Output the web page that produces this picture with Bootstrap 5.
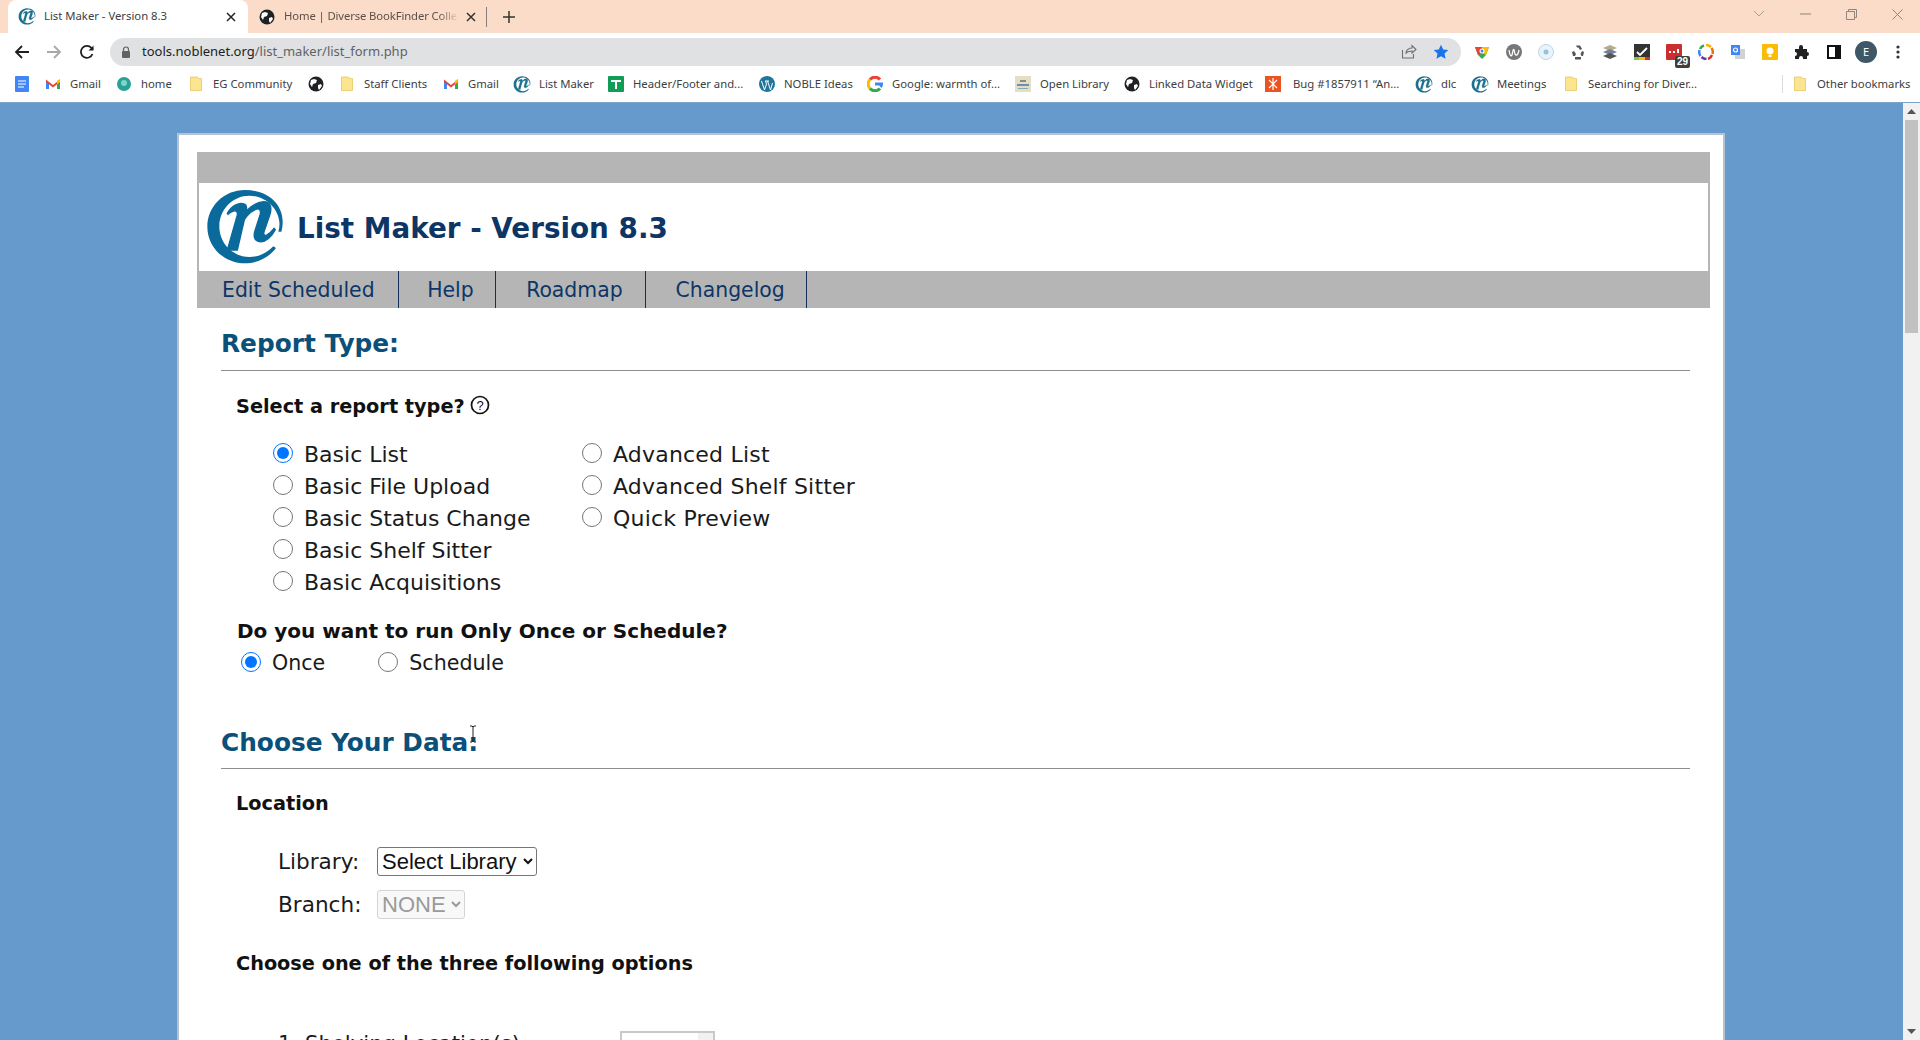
<!DOCTYPE html>
<html lang="en">
<head>
<meta charset="utf-8">
<title>List Maker - Version 8.3</title>
<link href="https://cdn.jsdelivr.net/npm/bootstrap@5.3.0/dist/css/bootstrap.min.css" rel="stylesheet">
<style>
html,body{height:1040px;overflow:hidden}
body{font-family:"DejaVu Sans",sans-serif;background:#fff;color:#111}
.uichrome{font-family:"Noto Sans","Open Sans",sans-serif;color:#3c4043}
.tabstrip{height:33px;background:#fbdcc8;padding-left:8px}
.tabitem{height:33px;font-size:11.3px;white-space:nowrap}
.tabactive{width:240px;background:#fff;border-radius:8px 8px 0 0;padding-left:11px}
.tabother{width:280px;padding-left:11px}
.tabfavicon{margin-right:7px;flex:none}
.tablabel{width:176px;overflow:hidden}
.tabactive .tablabel{width:177px;margin-left:9px}
.tabother .tablabel{width:175px;margin-left:9px;letter-spacing:-.12px;-webkit-mask-image:linear-gradient(90deg,#000 88%,transparent);mask-image:linear-gradient(90deg,#000 88%,transparent);color:#5b5048}
.closemark{margin-left:5px}
.tabother .closemark{margin-left:7px}
.tabsep{width:1px;height:20px;background:#8a7f78;margin:0 16px 0 10px}
.winctl{width:46px;height:28px}
.toolbar{height:36px;background:#fff;padding-top:5px;align-items:flex-start}
.navbtn{width:32px;height:28px;flex:none}
.navfirst{margin-left:2px}
.navthird{margin-left:1px}
.addrbar{width:1351px;height:28px;background:#dfe1e2;border-radius:14px;margin-left:7px;padding-left:11px;font-size:13px;flex:none}
.urltext{margin-left:3px}
.urlhost{color:#202124}.urlpath{color:#5f6368}
.starmark{margin:0 12px 0 16px}
.extgroup{margin-left:5px}
.extcell{width:32px;height:28px;flex:none;position:relative}
.extbadge{position:absolute;right:0;bottom:-2px;background:#3c4043;color:#fff;font:700 10px/12px "Liberation Sans",sans-serif;padding:0 2px;border-radius:2px}
.bmbar{height:33px;background:#fff;font-size:11.3px;padding:0 0 3px 14px;display:grid;grid-template-columns:31px 71px 72px 120px 31px 104px 71px 94px 151px 108px 148px 109px 141px 151px 56px 91px 219px 10px auto;align-items:center;color:#3c4043;white-space:nowrap}
.bmsep{width:1px;height:18px;background:#dadce0}
.gapnine{gap:9px}
.gapbug{gap:12px}
.nfav{margin:0 -2px;color:#1b6f8f;flex:none}
.pageview{height:938px;overflow:hidden;background:#6699cc;border-top:1px solid #7ea3cb}
.pagescroll{flex:1 1 auto;min-width:0;overflow:hidden;position:relative}
.scrollrail{width:17px;flex:none;background:#f1f1f1}
.scrollbtn{height:17px;flex:none}
.scrollthumb{width:13px;height:213px;background:#c1c1c1;margin-left:2px;flex:none}
.scrollfill{flex:1 1 auto}
.sheet{width:1548px;margin:30px 0 0 177px;background:#fff;border:2px solid #b4c2d1;border-bottom:0;padding:17px 13px 60px 18px;border-radius:0}
.topband{height:31px;background:#b5b5b5}
.titlebox{height:88px;border:solid #b5b5b5;border-width:0 2px;background:#fff;padding-left:1px;gap:7px}
.titletext{font-size:27.8px;font-weight:700;color:#0d3566;margin:3px 0 0;line-height:1.2}
.logomark{color:#0a6a9c;flex:none}
.menustrip{height:37px;background:#b5b5b5}
.menustrip .nav-link{height:37px;padding:0 21.5px 0 30px;font-size:20.4px;color:#0d3566;border-right:1px solid #14305a;line-height:38px}
.menustrip .nav-item:nth-child(1) .nav-link{padding:0 23px 0 25px}
.menustrip .nav-item:nth-child(2) .nav-link{padding:0 21.5px 0 28.500px}
.menustrip .nav-item:nth-child(3) .nav-link{padding-right:22px}
.formbody{padding-left:24px;width:1493px}
.sectionhead{font-size:24.8px;font-weight:700;color:#0a5078;line-height:30px;margin:21px 0 11px 0}
.sectionrule{margin:0;border:0;border-top:1px solid #8d8d8d;opacity:1;width:1469px}
.subhead{font-size:19.3px;font-weight:700;line-height:24px;margin-left:15px;color:#111}
.subwide{font-size:20px;margin-left:16px;margin-top:21px}
.optionrow{height:32px;font-size:22px;gap:11px;white-space:nowrap;color:#1a1a1a}
.optionrow input{width:20px;height:20px;margin:0 0 3px 0;flex:none}
.optionrow label{margin:0}
.optiongrid{margin:19px 0 0 52px}
.optioncol{width:309px}
.optionwide{letter-spacing:.2px}
.oncewrap{margin:4px 0 0 20px}
.oncewrap .optionrow{font-size:20.6px}
.oncewrap .optionrow+.optionrow{margin-left:53px}
.fieldrow{height:29px;font-size:21.6px;margin-left:57px;color:#1a1a1a}
.fieldrow label{width:99px;margin:0;padding-top:2px;white-space:nowrap}
.nativepick{font:22px/25px "Liberation Sans",Arial,sans-serif;height:29px;border:1px solid #767676;border-radius:3px;background:#fff;color:#111;padding:0}
.nativepick:disabled{color:#9a9a9a;border-color:#d4d4d4;background:#f8f8f8;opacity:1}
.pickwide{width:160px}
.picknarrow{width:88px}
.listpick{width:95px;height:120px;border:2px solid #c9c9c9;background:#fff;flex:none}
.listtrack{width:15px;background:#f1f1f1}
.shelfrow{margin:55px 0 0 57px;height:120px}
.shelflabel{width:342px;font-size:21.2px;line-height:20px;padding-top:3px;white-space:nowrap;color:#1a1a1a}
.helpmark{margin:0 0 4px 5px}
.nfill{stroke:currentColor;stroke-width:4}
.mtone{margin-top:24px}
.mttwo{margin-top:31px}
.mtthree{margin-top:14px}
.mtfour{margin-top:33px}
.mtfive{margin-top:23px}
.headlow{margin-top:49px;margin-bottom:10px}
.caret{position:absolute;left:469px;top:622px}
</style>
</head>
<body>
<svg width="0" height="0" class="position-absolute">
<defs>
<symbol id="nlogo" viewBox="0 0 270 252">
<path fill-rule="evenodd" d="M135 15C72 15 22 64 22 125s50 110 113 110c38 0 72-18 93-46l-8-5c-19 20-44 32-72 32-50 0-90-41-90-92s40-92 90-92c46 0 86 36 90 78 1 10 0 20-3 30h9c3-10 4-20 4-30 0-57-50-95-113-95z" fill="currentColor"/>
<path class="nfill" d="M82 85C95 62 118 50 135 58c7 4 5 20 1 34L112 195H82l30-105c2-10-4-14-12-12-6 2-12 6-16 10z" fill="currentColor"/>
<path class="nfill" d="M118 108c17-33 47-58 74-58 20 0 24 18 18 38l-18 52c-2 10 2 13 8 10 8-4 16-12 22-20l4 4c-12 22-30 38-48 36-14-2-18-15-14-30l16-50c4-14-2-20-10-18-20 6-42 33-52 58z" fill="currentColor"/>
</symbol>
<symbol id="folder" viewBox="0 0 16 16"><path d="M2.500 1h7l1 1.500h3v12h-11z" fill="#fce58f" stroke="#e6c766" stroke-width=".8"/></symbol>
<symbol id="gmail" viewBox="0 0 16 16"><path d="M1 4v9h3V7z" fill="#4285f4"/><path d="M15 4v9h-3V7z" fill="#34a853"/><path d="M1 3.500 8 9l7-5.500V6L8 11.500 1 6z" fill="#ea4335"/><path d="M12 4.800 15 3v3l-3 2.400z" fill="#fbbc04"/></symbol>
<symbol id="globe" viewBox="0 0 16 16"><circle cx="8" cy="8" r="7.500" fill="#202124"/><path d="M3 4l3-1 3 1-1 3-3 1-1 3-2-3zM10 9l3-1 1 2-3 4-1-2z" fill="#fff"/></symbol>
</defs>
</svg>

<div class="uichrome">
<div class="tabstrip d-flex align-items-end">
  <div class="tabitem tabactive d-flex align-items-center">
    <svg width="20" height="19" class="tabfavicon nfav"><use href="#nlogo"/></svg>
    <span class="tablabel">List Maker - Version 8.3</span>
    <svg width="10" height="10" viewBox="0 0 10 10" class="closemark"><path d="M1 1l8 8M9 1l-8 8" stroke="#222" stroke-width="1.500"/></svg>
  </div>
  <div class="tabitem tabother d-flex align-items-center">
    <svg width="16" height="16" class="flex-none"><use href="#globe"/></svg>
    <span class="tablabel">Home | Diverse BookFinder Colle</span>
    <svg width="10" height="10" viewBox="0 0 10 10" class="closemark"><path d="M1 1l8 8M9 1l-8 8" stroke="#333" stroke-width="1.500"/></svg>
    <span class="tabsep"></span>
    <svg width="12" height="12" viewBox="0 0 12 12"><path d="M6 0v12M0 6h12" stroke="#333" stroke-width="1.500"/></svg>
  </div>
  <div class="d-flex ms-auto align-self-start">
    <div class="winctl d-flex align-items-center justify-content-center"><svg width="12" height="8" viewBox="0 0 12 8"><path d="M1 1l5 5 5-5" fill="none" stroke="#a89e97"/></svg></div>
    <div class="winctl d-flex align-items-center justify-content-center"><svg width="11" height="2"><path d="M0 1h11" stroke="#8f8680"/></svg></div>
    <div class="winctl d-flex align-items-center justify-content-center"><svg width="11" height="11" viewBox="0 0 11 11"><path d="M.5 2.500h8v8h-8zM2.500 2.500v-2h8v8h-2" fill="none" stroke="#8f8680"/></svg></div>
    <div class="winctl d-flex align-items-center justify-content-center"><svg width="11" height="11" viewBox="0 0 11 11"><path d="M.5.5l10 10M10.500.5l-10 10" stroke="#8f8680"/></svg></div>
  </div>
</div>

<div class="toolbar d-flex ps-1">
  <div class="navbtn navfirst d-flex align-items-center justify-content-center"><svg width="16" height="16" viewBox="0 0 16 16"><path d="M15 8H2M8 2 2 8l6 6" fill="none" stroke="#1f1f1f" stroke-width="1.800"/></svg></div>
  <div class="navbtn d-flex align-items-center justify-content-center"><svg width="16" height="16" viewBox="0 0 16 16"><path d="M1 8h13M8 2l6 6-6 6" fill="none" stroke="#a6a8ab" stroke-width="1.800"/></svg></div>
  <div class="navbtn navthird d-flex align-items-center justify-content-center"><svg width="16" height="16" viewBox="0 0 16 16"><path d="M13.500 10A6 6 0 1 1 12.500 4L14 5.500" fill="none" stroke="#1f1f1f" stroke-width="1.800"/><path d="M14.500 1.500v5h-5z" fill="#1f1f1f"/></svg></div>
  <div class="addrbar d-flex align-items-center">
    <svg width="10" height="12" viewBox="0 0 10 12" class="me-2"><path d="M2.500 5V3.500a2.500 2.500 0 0 1 5 0V5" fill="none" stroke="#5f6368" stroke-width="1.200"/><rect x="1" y="5" width="8" height="7" rx="1" fill="#5f6368"/></svg>
    <span class="urltext"><span class="urlhost">tools.noblenet.org</span><span class="urlpath">/list_maker/list_form.php</span></span>
    <svg width="16" height="16" viewBox="0 0 16 16" class="ms-auto"><path d="M1.500 6v8h11v-4M5 9c0-3 3-5 6-5V1.500L15 5.500 11 9V7c-3 0-5 1-6 2z" fill="none" stroke="#6d7175" stroke-width="1.100"/></svg>
    <svg width="16" height="16" viewBox="0 0 16 16" class="starmark"><path d="M8 .8l2.200 4.700 5.100.6-3.800 3.500 1 5.100L8 12.200l-4.500 2.500 1-5.100L.7 6.100l5.100-.6z" fill="#1a73e8"/></svg>
  </div>
  <div class="extgroup d-flex">
    <div class="extcell d-flex align-items-center justify-content-center"><svg width="16" height="16" viewBox="0 0 16 16"><path d="M1 3h14l-3 8-4 4-4-4z" fill="#34a853"/><path d="M1 3h7v6L4 11z" fill="#ea4335"/><path d="M8 3h7l-3 8-4-2z" fill="#fbbc04"/><circle cx="8" cy="7" r="2.500" fill="#fff"/><circle cx="8" cy="7" r="1.500" fill="#4285f4"/></svg></div>
    <div class="extcell d-flex align-items-center justify-content-center"><svg width="16" height="16" viewBox="0 0 16 16"><circle cx="8" cy="8" r="8" fill="#777"/><path d="M3 6c1 7 3 7 3.500 3S8 4 8.500 8s3 5 4.500-2" fill="none" stroke="#fff" stroke-width="1.300"/></svg></div>
    <div class="extcell d-flex align-items-center justify-content-center"><svg width="16" height="16" viewBox="0 0 16 16"><circle cx="8" cy="8" r="7.500" fill="#eaf3f8" stroke="#bcd6e4"/><circle cx="8" cy="8" r="2.500" fill="#8fc3e3"/></svg></div>
    <div class="extcell d-flex align-items-center justify-content-center"><svg width="16" height="16" viewBox="0 0 16 16"><path d="M6 1.500h4l2 3.500-2 1-1.500-2.500H7zM2 8l2-1 2 3-1 2H3zM14 8l-2-1-1.500 3 1 2H13zM5 13h6v2.500H5z" fill="#555"/></svg></div>
    <div class="extcell d-flex align-items-center justify-content-center"><svg width="16" height="16" viewBox="0 0 16 16"><path d="M1 4l7-3 7 3-7 3z" fill="#b9a98d"/><path d="M1 8l7-3 7 3-7 3z" fill="#6f8299"/><path d="M1 12l7-3 7 3-7 3z" fill="#555"/></svg></div>
    <div class="extcell d-flex align-items-center justify-content-center"><svg width="16" height="16" viewBox="0 0 16 16"><rect width="16" height="16" fill="#333"/><path d="M3 8l3 3 7-7" fill="none" stroke="#fff" stroke-width="1.800"/><path d="M0 13h5v3H0z" fill="#8bc34a"/><path d="M5 13h6v3H5z" fill="#fbbc04"/><path d="M11 13h5v3h-5z" fill="#d32f2f"/></svg></div>
    <div class="extcell d-flex align-items-center justify-content-center"><svg width="16" height="16" viewBox="0 0 16 16"><rect width="16" height="16" rx="1" fill="#cc2e2e"/><path d="M3 7h2v2H3zM7 7h2v2H7zM11 5h2v4h-2z" fill="#fff"/></svg><span class="extbadge">29</span></div>
    <div class="extcell d-flex align-items-center justify-content-center"><svg width="16" height="16" viewBox="0 0 16 16" fill="none" stroke-width="2.500"><path d="M8 1a7 7 0 0 1 5 2" stroke="#f4b400"/><path d="M13.500 4a7 7 0 0 1 1 6" stroke="#e8710a"/><path d="M14 11a7 7 0 0 1-4 4" stroke="#d93025"/><path d="M8.500 15a7 7 0 0 1-5-2" stroke="#673ab7"/><path d="M2.500 12a7 7 0 0 1-1-6" stroke="#4285f4"/><path d="M2 5a7 7 0 0 1 4-3.500" stroke="#34a853"/></svg></div>
    <div class="extcell d-flex align-items-center justify-content-center"><svg width="16" height="16" viewBox="0 0 16 16"><path d="M1 1h9v10H1z" fill="#4285f4"/><path d="M10 5h5v10H5v-4h5z" fill="#cfd3d7"/><circle cx="5.500" cy="6" r="2" fill="none" stroke="#fff" stroke-width="1.200"/></svg></div>
    <div class="extcell d-flex align-items-center justify-content-center"><svg width="16" height="16" viewBox="0 0 16 16"><rect width="16" height="16" rx="1" fill="#fbbc04"/><circle cx="8" cy="7" r="3.500" fill="#fff"/><path d="M6.500 11h3v2h-3z" fill="#fff"/></svg></div>
    <div class="extcell d-flex align-items-center justify-content-center"><svg width="16" height="16" viewBox="0 0 16 16"><path d="M1 5h4V3a2 2 0 0 1 4 0v2h4v3a2 2 0 0 1 0 4v3H9v-1a2 2 0 0 0-4 0v1H1v-3a2 2 0 0 0 0-4z" fill="#222"/></svg></div>
    <div class="extcell d-flex align-items-center justify-content-center"><svg width="14" height="14" viewBox="0 0 14 14"><path d="M0 0h14v14H0z" fill="#111"/><path d="M2 2h6v10H2z" fill="#fff"/></svg></div>
    <div class="extcell d-flex align-items-center justify-content-center"><svg width="22" height="22" viewBox="0 0 22 22"><circle cx="11" cy="11" r="11" fill="#3f5766"/><text x="11" y="15" font-size="11" fill="#fff" text-anchor="middle" font-family="Noto Sans">E</text></svg></div>
    <div class="extcell d-flex align-items-center justify-content-center"><svg width="4" height="14" viewBox="0 0 4 14"><circle cx="2" cy="2" r="1.600" fill="#333"/><circle cx="2" cy="7" r="1.600" fill="#333"/><circle cx="2" cy="12" r="1.600" fill="#333"/></svg></div>
  </div>
</div>

<div class="bmbar">
  <div><svg width="16" height="16" viewBox="0 0 16 16"><rect x="1" width="14" height="16" rx="1" fill="#4285f4"/><path d="M4 5h8M4 8h8M4 11h6" stroke="#fff" stroke-width="1.200"/></svg></div>
  <div class="d-flex gapnine align-items-center"><svg width="16" height="16"><use href="#gmail"/></svg><span>Gmail</span></div>
  <div class="d-flex gapnine align-items-center"><svg width="16" height="16" viewBox="0 0 16 16"><circle cx="8" cy="8" r="7" fill="#2aa198"/><circle cx="8" cy="7" r="3" fill="#7ed6c4"/></svg><span>home</span></div>
  <div class="d-flex gapnine align-items-center"><svg width="16" height="16"><use href="#folder"/></svg><span>EG Community</span></div>
  <div><svg width="16" height="16"><use href="#globe"/></svg></div>
  <div class="d-flex gapnine align-items-center"><svg width="16" height="16"><use href="#folder"/></svg><span>Staff Clients</span></div>
  <div class="d-flex gapnine align-items-center"><svg width="16" height="16"><use href="#gmail"/></svg><span>Gmail</span></div>
  <div class="d-flex gapnine align-items-center"><svg width="20" height="19" class="nfav"><use href="#nlogo"/></svg><span>List Maker</span></div>
  <div class="d-flex gapnine align-items-center"><svg width="16" height="16" viewBox="0 0 16 16"><rect width="16" height="16" rx="1" fill="#0f9d58"/><path d="M3 5h10M8 5v8" stroke="#fff" stroke-width="2"/></svg><span>Header/Footer and...</span></div>
  <div class="d-flex gapnine align-items-center"><svg width="16" height="16" viewBox="0 0 16 16"><circle cx="8" cy="8" r="8" fill="#21759b"/><path d="M2.500 5l3 9 2-6-1-3M6 5h4M8.500 5l3 9 2-7" fill="none" stroke="#fff"/></svg><span>NOBLE Ideas</span></div>
  <div class="d-flex gapnine align-items-center"><svg width="16" height="16" viewBox="0 0 16 16" fill="none" stroke-width="3"><path d="M13 3.500A6.500 6.500 0 0 0 3 3.500" stroke="#ea4335"/><path d="M3 3.500a6.500 6.500 0 0 0 0 9" stroke="#fbbc04"/><path d="M3 12.500a6.500 6.500 0 0 0 10 0" stroke="#34a853"/><path d="M13.500 11c1-1 1-2 1-3H8" stroke="#4285f4"/></svg><span>Google: warmth of...</span></div>
  <div class="d-flex gapnine align-items-center"><svg width="16" height="16" viewBox="0 0 16 16"><rect width="16" height="16" fill="#e4dfc4"/><path d="M2 8h12v2H2z" fill="#6a8dbb"/><path d="M5 4h6v2H5z" fill="#8a8f7a"/><path d="M3 12h10v1H3z" fill="#8aa"/></svg><span>Open Library</span></div>
  <div class="d-flex gapnine align-items-center"><svg width="16" height="16"><use href="#globe"/></svg><span>Linked Data Widget</span></div>
  <div class="d-flex gapbug align-items-center"><svg width="16" height="16" viewBox="0 0 16 16"><rect width="16" height="16" fill="#e95420"/><path d="M4 4l8 8M12 4l-8 8M8 2v12" stroke="#fff" stroke-width="1.200"/></svg><span>Bug #1857911 “An...</span></div>
  <div class="d-flex gapnine align-items-center"><svg width="20" height="19" class="nfav"><use href="#nlogo"/></svg><span>dlc</span></div>
  <div class="d-flex gapnine align-items-center"><svg width="20" height="19" class="nfav"><use href="#nlogo"/></svg><span>Meetings</span></div>
  <div class="d-flex gapnine align-items-center"><svg width="16" height="16"><use href="#folder"/></svg><span>Searching for Diver...</span></div>
  <div class="bmsep"></div>
  <div class="d-flex gapnine align-items-center"><svg width="16" height="16"><use href="#folder"/></svg><span>Other bookmarks</span></div>
</div>
</div>

<div class="pageview d-flex">
  <div class="pagescroll">
    <div class="card sheet">
      <div class="topband"></div>
      <div class="titlebox d-flex align-items-center">
        <svg width="90" height="84" class="logomark"><use href="#nlogo"/></svg>
        <h1 class="titletext">List Maker - Version 8.3</h1>
      </div>
      <ul class="nav menustrip">
        <li class="nav-item"><a class="nav-link" href="#">Edit Scheduled</a></li>
        <li class="nav-item"><a class="nav-link" href="#">Help</a></li>
        <li class="nav-item"><a class="nav-link" href="#">Roadmap</a></li>
        <li class="nav-item"><a class="nav-link" href="#">Changelog</a></li>
      </ul>
      <form class="formbody">
        <h2 class="sectionhead">Report Type:</h2>
        <hr class="sectionrule">
        <div class="subhead d-flex align-items-center mtone">Select a report type?
          <svg class="helpmark" width="20" height="20" viewBox="0 0 20 20"><circle cx="10" cy="10" r="8.500" fill="none" stroke="#111" stroke-width="1.700"/><text x="10" y="14.500" font-size="13" font-weight="400" text-anchor="middle" fill="#111" font-family="Liberation Sans">?</text></svg>
        </div>
        <div class="optiongrid d-flex">
          <div class="optioncol d-flex flex-column">
            <div class="optionrow d-flex align-items-center"><input type="radio" name="rt" id="r1" checked><label for="r1">Basic List</label></div>
            <div class="optionrow d-flex align-items-center"><input type="radio" name="rt" id="r2"><label for="r2">Basic File Upload</label></div>
            <div class="optionrow d-flex align-items-center"><input type="radio" name="rt" id="r3"><label for="r3">Basic Status Change</label></div>
            <div class="optionrow d-flex align-items-center"><input type="radio" name="rt" id="r4"><label for="r4">Basic Shelf Sitter</label></div>
            <div class="optionrow d-flex align-items-center"><input type="radio" name="rt" id="r5"><label for="r5">Basic Acquisitions</label></div>
          </div>
          <div class="optionwide d-flex flex-column">
            <div class="optionrow d-flex align-items-center"><input type="radio" name="rt" id="r6"><label for="r6">Advanced List</label></div>
            <div class="optionrow d-flex align-items-center"><input type="radio" name="rt" id="r7"><label for="r7">Advanced Shelf Sitter</label></div>
            <div class="optionrow d-flex align-items-center"><input type="radio" name="rt" id="r8"><label for="r8">Quick Preview</label></div>
          </div>
        </div>
        <div class="subhead subwide">Do you want to run Only Once or Schedule?</div>
        <div class="oncewrap d-flex">
          <div class="optionrow d-flex align-items-center"><input type="radio" name="fr" id="o1" checked><label for="o1">Once</label></div>
          <div class="optionrow d-flex align-items-center"><input type="radio" name="fr" id="o2"><label for="o2">Schedule</label></div>
        </div>
        <h2 class="sectionhead headlow">Choose Your Data:</h2>
        <hr class="sectionrule">
        <div class="subhead mtfive">Location</div>
        <div class="fieldrow d-flex align-items-center mttwo"><label for="lib">Library:</label><select id="lib" class="nativepick pickwide"><option>Select Library</option></select></div>
        <div class="fieldrow d-flex align-items-center mtthree"><label for="br">Branch:</label><select id="br" class="nativepick picknarrow" disabled><option>NONE</option></select></div>
        <div class="subhead mtfour">Choose one of the three following options</div>
        <div class="shelfrow d-flex">
          <div class="shelflabel">1. Shelving Location(s):</div>
          <div class="listpick d-flex justify-content-end"><div class="listtrack"></div></div>
        </div>
      </form>
    </div>
    <svg class="caret" width="8" height="18" viewBox="0 0 8 18"><path d="M1 1h2l1 1 1-1h2M4 2v14M1 17h2l1-1 1 1h2" fill="none" stroke="#222"/></svg>
  </div>
  <div class="scrollrail d-flex flex-column">
    <div class="scrollbtn d-flex align-items-center justify-content-center"><svg width="9" height="5"><path d="M4.500 0 9 5H0z" fill="#555"/></svg></div>
    <div class="scrollthumb"></div>
    <div class="scrollfill"></div>
    <div class="scrollbtn d-flex align-items-center justify-content-center"><svg width="9" height="5"><path d="M0 0h9L4.500 5z" fill="#555"/></svg></div>
  </div>
</div>
<script src="https://cdn.jsdelivr.net/npm/bootstrap@5.3.0/dist/js/bootstrap.bundle.min.js"></script>
</body>
</html>
